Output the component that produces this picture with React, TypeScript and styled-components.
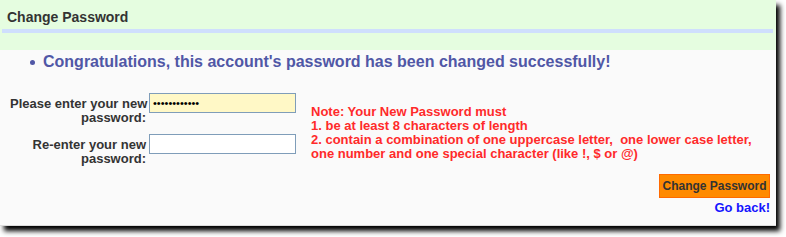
import React, { useState } from "react";
import styled, { createGlobalStyle } from "styled-components";

const GlobalStyle = createGlobalStyle`
  html, body {
    margin: 0;
    padding: 0;
    background: #ffffff;
  }
  body {
    font-family: "Liberation Sans", Arial, sans-serif;
  }
`;

const Page = styled.div`
  width: 786px;
  height: 237px;
  overflow: hidden;
`;

const Window = styled.div`
  width: 776px;
  height: 225px;
  background: #fafafa;
  border-bottom: 1px solid #dcdcdc;
  box-shadow: 4px 5px 5px #000;
  display: flex;
  flex-direction: column;
  overflow: hidden;
`;

const Header = styled.div`
  flex-shrink: 0;
  height: 50px;
  background: #e5fde0;
  box-sizing: border-box;
`;

const Title = styled.h2`
  margin: 0 3px 0 2px;
  padding: 7px 0 2px 5px;
  height: 20px;
  line-height: 20px;
  font-size: 14px;
  font-weight: bold;
  color: #333333;
  border-bottom: 4px solid #cfdffd;
`;

const Message = styled.div`
  flex-shrink: 0;
  display: flex;
  align-items: center;
  padding: 2px 0 0 30px;
  height: 20px;
  font-size: 16px;
  font-weight: bold;
  color: #5057a6;
  line-height: 20px;
`;

const Bullet = styled.span`
  width: 5px;
  height: 5px;
  border-radius: 50%;
  background: #5057a6;
  margin-right: 8px;
`;

const FormArea = styled.div`
  flex-shrink: 0;
  display: flex;
  padding: 21px 0 0 10px;
`;

const Fields = styled.div`
  display: grid;
  grid-template-columns: 136px 147px;
  column-gap: 3px;
  row-gap: 9px;
`;

const Label = styled.label`
  margin-top: 4px;
  text-align: right;
  white-space: nowrap;
  font-size: 13px;
  line-height: 14px;
  font-weight: bold;
  color: #333333;
`;

const Input = styled.input<{ $filled?: boolean }>`
  box-sizing: border-box;
  width: 147px;
  height: 20px;
  padding: 0 3px;
  border: 1px solid #7f9db9;
  background: ${(p) => (p.$filled ? "#fff8c6" : "#ffffff")};
  font-family: "Liberation Sans", Arial, sans-serif;
  font-size: 11px;
  color: #000;
  outline: none;
`;

const Note = styled.div`
  margin: 12px 0 0 15px;
  font-size: 13px;
  line-height: 14px;
  font-weight: bold;
  color: #ff2a2a;
`;

const Actions = styled.div`
  flex-shrink: 0;
  display: flex;
  flex-direction: column;
  align-items: flex-end;
  padding: 8px 6px 0 0;
`;

const SubmitButton = styled.button`
  box-sizing: border-box;
  width: 111px;
  height: 24px;
  padding: 0;
  background: #ff8a00;
  border: 1px solid #ff6a00;
  font-family: "Liberation Sans", Arial, sans-serif;
  font-size: 12px;
  font-weight: bold;
  color: #333333;
  cursor: pointer;
`;

const BackLink = styled.a`
  margin-top: 2px;
  font-size: 13px;
  line-height: 16px;
  font-weight: bold;
  color: #1414ff;
  text-decoration: none;
`;

export default function App() {
  const [password, setPassword] = useState("abcdefghijkl");
  const [confirm, setConfirm] = useState("");

  return (
    <Page>
      <GlobalStyle />
      <Window>
        <Header>
          <Title>Change Password</Title>
        </Header>
        <Message>
          <Bullet />
          Congratulations, this account's password has been changed successfully!
        </Message>
        <FormArea>
          <Fields>
            <Label htmlFor="pw1">
              Please enter your new
              <br />
              password:
            </Label>
            <Input
              id="pw1"
              type="password"
              $filled
              value={password}
              onChange={(e) => setPassword(e.target.value)}
            />
            <Label htmlFor="pw2">
              Re-enter your new
              <br />
              password:
            </Label>
            <Input
              id="pw2"
              type="password"
              value={confirm}
              onChange={(e) => setConfirm(e.target.value)}
            />
          </Fields>
          <Note>
            Note: Your New Password must
            <br />
            1. be at least 8 characters of length
            <br />
            2. contain a combination of one uppercase letter,&nbsp; one lower case letter,
            <br />
            one number and one special character (like !, $ or @)
          </Note>
        </FormArea>
        <Actions>
          <SubmitButton type="button">Change Password</SubmitButton>
          <BackLink href="#">Go back!</BackLink>
        </Actions>
      </Window>
    </Page>
  );
}
